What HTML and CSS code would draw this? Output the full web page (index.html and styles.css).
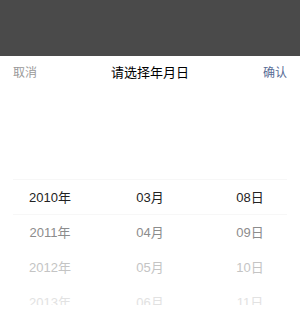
FILE: index.html
```html
<!DOCTYPE html>
<html lang="zh-CN">
<head>
    <meta charset="UTF-8">
    <title>请选择年月日</title>
    <link rel="stylesheet" href="styles.css">
</head>
<body>
    <div class="mask"></div>
    <div class="panel">
        <div class="toolbar">
            <span class="btn cancel">取消</span>
            <span class="title">请选择年月日</span>
            <span class="btn confirm">确认</span>
        </div>
        <div class="picker">
            <div class="indicator"></div>
            <div class="columns">
                <div class="column">
                    <div class="item row-0">2010年</div>
                    <div class="item row-1">2011年</div>
                    <div class="item row-2">2012年</div>
                    <div class="item row-3">2013年</div>
                </div>
                <div class="column">
                    <div class="item row-0">03月</div>
                    <div class="item row-1">04月</div>
                    <div class="item row-2">05月</div>
                    <div class="item row-3">06月</div>
                </div>
                <div class="column">
                    <div class="item row-0">08日</div>
                    <div class="item row-1">09日</div>
                    <div class="item row-2">10日</div>
                    <div class="item row-3">11日</div>
                </div>
            </div>
        </div>
    </div>
</body>
</html>
```

FILE: styles.css
```css
html, body {
    margin: 0;
    padding: 0;
    height: 320px;
    overflow: hidden;
}
body {
    font-family: "Liberation Sans", "Noto Sans CJK SC", sans-serif;
    background-color: #4a4a4a;
    display: flex;
    flex-direction: column;
}
.mask {
    height: 56px;
    flex-shrink: 0;
}
.panel {
    flex-grow: 1;
    background-color: #fff;
    display: flex;
    flex-direction: column;
}
.toolbar {
    height: 34px;
    line-height: 34px;
    padding: 0 13px;
    display: flex;
    justify-content: space-between;
}
.btn {
    font-size: 12px;
}
.cancel {
    color: #999;
}
.confirm {
    color: #576b95;
}
.title {
    font-size: 13px;
    color: #000;
}
.picker {
    position: relative;
    height: 215px;
    overflow: hidden;
}
.indicator {
    position: absolute;
    left: 13px;
    right: 13px;
    top: 89px;
    height: 34px;
    border-top: 1px solid #f7f7f7;
    border-bottom: 1px solid #f7f7f7;
}
.columns {
    display: flex;
    padding-top: 90px;
}
.column {
    flex: 1;
    text-align: center;
}
.item {
    height: 35px;
    line-height: 35px;
    font-size: 13px;
}
.row-0 { color: #222; }
.row-1 { color: #8c8c8c; }
.row-2 { color: #c4c4c4; }
.row-3 { color: #e2e2e2; }
```
